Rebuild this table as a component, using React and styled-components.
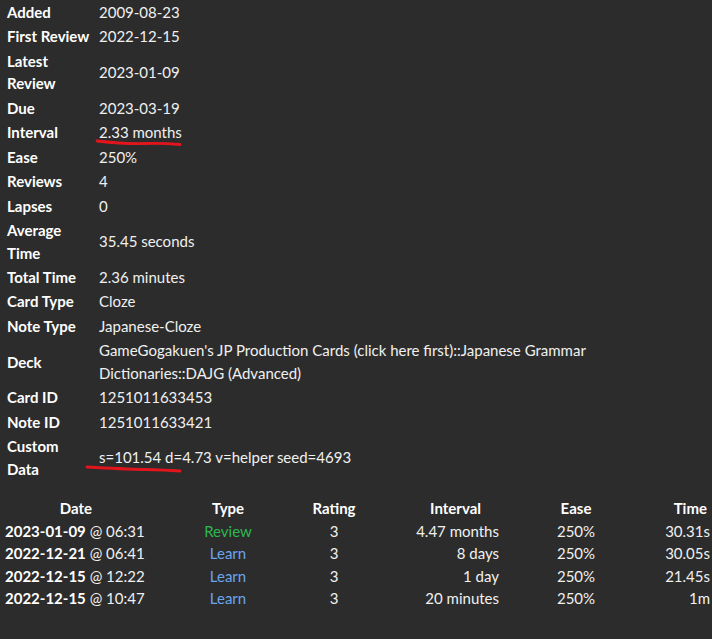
import React from "react";
import styled, { createGlobalStyle } from "styled-components";

const GlobalStyle = createGlobalStyle`
  html, body {
    margin: 0;
    background: #2c2c2c;
  }
  body {
    font-family: Lato, "Noto Sans", sans-serif;
    font-size: 15px;
    color: #f2f2f2;
  }
`;

const info = [
  ["Added", "2009-08-23"],
  ["First Review", "2022-12-15"],
  ["Latest Review", "2023-01-09"],
  ["Due", "2023-03-19"],
  ["Interval", "2.33 months", "interval"],
  ["Ease", "250%"],
  ["Reviews", "4"],
  ["Lapses", "0"],
  ["Average Time", "35.45 seconds"],
  ["Total Time", "2.36 minutes"],
  ["Card Type", "Cloze"],
  ["Note Type", "Japanese-Cloze"],
  [
    "Deck",
    "GameGogakuen's JP Production Cards (click here first)::Japanese Grammar Dictionaries::DAJG (Advanced)",
  ],
  ["Card ID", "1251011633453"],
  ["Note ID", "1251011633421"],
  ["Custom Data", "s=101.54 d=4.73 v=helper seed=4693", "custom"],
];

const revlog = [
  ["2023-01-09", "06:31", "Review", "3", "4.47 months", "250%", "30.31s"],
  ["2022-12-21", "06:41", "Learn", "3", "8 days", "250%", "30.05s"],
  ["2022-12-15", "12:22", "Learn", "3", "1 day", "250%", "21.45s"],
  ["2022-12-15", "10:47", "Learn", "3", "20 minutes", "250%", "1m"],
];

const Page = styled.div`
  padding: 1px 2px 40px 5px;
`;

const InfoGrid = styled.div`
  display: grid;
  grid-template-columns: 88px minmax(0, 500px);
  column-gap: 6px;
  row-gap: 2px;
  line-height: 22.45px;
`;

const Label = styled.div`
  display: flex;
  align-items: center;
  font-weight: 700;
  color: #ffffff;
  padding-left: 2px;
`;

const Value = styled.div`
  display: flex;
  align-items: center;
  position: relative;
  color: #f0f0f0;
`;

const Mark = styled.svg`
  position: absolute;
  left: ${(p) => p.$left}px;
  top: ${(p) => p.$top}px;
  pointer-events: none;
`;

const Revlog = styled.div`
  display: grid;
  grid-template-columns: 142px 162px 50px 140px 154px 1fr;
  line-height: 22.6px;
  margin-top: 17px;
`;

const Head = styled.div`
  font-weight: 700;
  color: #ffffff;
  text-align: ${(p) => p.$align || "center"};
  padding-right: ${(p) => p.$pr || 0}px;
`;

const Cell = styled.div`
  text-align: ${(p) => p.$align || "center"};
  color: ${(p) => p.$color || "#f0f0f0"};
  white-space: nowrap;
`;

const DateStrong = styled.b`
  color: #ffffff;
`;

const typeColor = { Review: "#2cb84f", Learn: "#6aa6ee" };

function Underline({ width, left, top, d }) {
  return (
    <Mark $left={left} $top={top} width={width} height="8" viewBox={`0 0 ${width} 8`}>
      <path d={d} stroke="#e3151c" strokeWidth="2.8" fill="none" strokeLinecap="round" />
    </Mark>
  );
}

export default function App() {
  return (
    <Page>
      <GlobalStyle />
      <InfoGrid>
        {info.map(([label, value, mark]) => (
          <React.Fragment key={label}>
            <Label>{label}</Label>
            <Value>
              {value}
              {mark === "interval" && (
                <Underline width={90} left={-5} top={18} d="M3 2 Q 30 5 50 4.5 T 86 5.5" />
              )}
              {mark === "custom" && (
                <Underline width={100} left={-15} top={30} d="M3 2 Q 40 4 60 4.5 T 96 6" />
              )}
            </Value>
          </React.Fragment>
        ))}
      </InfoGrid>
      <Revlog>
        <Head>Date</Head>
        <Head>Type</Head>
        <Head>Rating</Head>
        <Head $align="right" $pr={18}>Interval</Head>
        <Head>Ease</Head>
        <Head $align="right" $pr={3}>Time</Head>
        {revlog.map(([d, t, type, rating, ivl, ease, time]) => (
          <React.Fragment key={d + t}>
            <Cell $align="left">
              <DateStrong>{d}</DateStrong> @ {t}
            </Cell>
            <Cell $color={typeColor[type]}>{type}</Cell>
            <Cell>{rating}</Cell>
            <Cell $align="right">{ivl}</Cell>
            <Cell>{ease}</Cell>
            <Cell $align="right">{time}</Cell>
          </React.Fragment>
        ))}
      </Revlog>
    </Page>
  );
}
